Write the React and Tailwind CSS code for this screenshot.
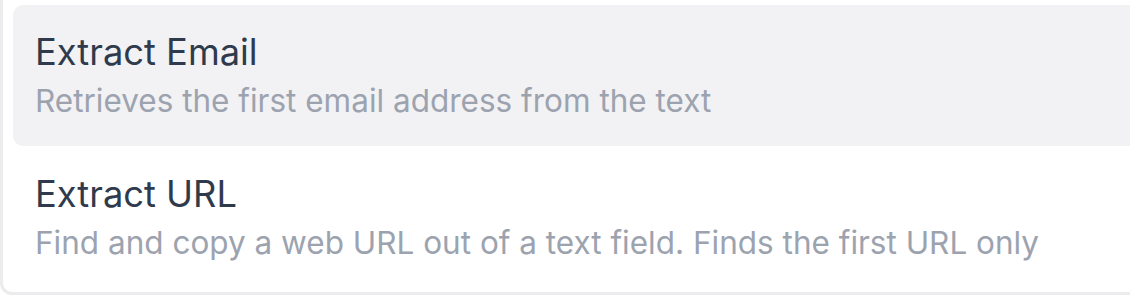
import React from 'react';

const items = [
  { title: 'Extract Email', desc: 'Retrieves the first email address from the text', active: true },
  { title: 'Extract URL', desc: 'Find and copy a web URL out of a text field. Finds the first URL only', active: false },
];

export default function App() {
  return (
    <div className="w-[1130px] h-[298px] overflow-hidden bg-white font-['Inter',sans-serif]">
      <div className="w-[1200px] h-[295px] border-l-[3px] border-b-[3px] border-[#ececee] rounded-bl-[12px] pl-[10px] pt-[5px] flex flex-col gap-px">
        {items.map((item) => (
          <div
            key={item.title}
            className={`h-[141px] rounded-[10px] px-[22px] pt-[23px] ${item.active ? 'bg-[#f2f2f4]' : ''}`}
          >
            <div className="text-[36.3px] leading-[48px] text-[#2f3a4c]">{item.title}</div>
            <div className="text-[31.5px] leading-[40px] text-[#9ca3af] mt-[5px]">{item.desc}</div>
          </div>
        ))}
      </div>
    </div>
  );
}
